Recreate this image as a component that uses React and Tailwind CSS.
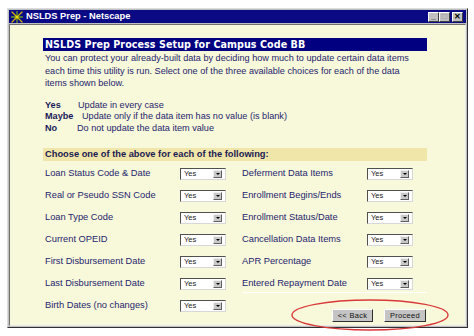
// NSLDS Prep — Process Setup dialog (Netscape window)

const LEFT_ROWS = [
  "Loan Status Code & Date",
  "Real or Pseudo SSN Code",
  "Loan Type Code",
  "Current OPEID",
  "First Disbursement Date",
  "Last Disbursement Date",
  "Birth Dates (no changes)",
];

const RIGHT_ROWS = [
  "Deferment Data Items",
  "Enrollment Begins/Ends",
  "Enrollment Status/Date",
  "Cancellation Data Items",
  "APR Percentage",
  "Entered Repayment Date",
];

const LEGEND = [
  { key: "Yes", text: "Update in every case", w: "w-[33px]" },
  { key: "Maybe", text: "Update only if the data item has no value (is blank)", w: "w-[37px]" },
  { key: "No", text: "Do not update the data item value", w: "w-[32px]" },
];

function YesSelect() {
  return (
    <div className="flex items-center w-[46px] h-[12px] bg-white border border-t-[#505050] border-l-[#505050] border-r-[#d8d8d8] border-b-[#d8d8d8]">
      <span className="flex-1 pl-[3px] text-[7.5px] leading-none text-[#222]">Yes</span>
      <div className="flex items-center justify-center w-[9px] h-[8px] mr-[3px] bg-[#c8c8c8] border border-t-[#f0f0f0] border-l-[#f0f0f0] border-r-[#606060] border-b-[#606060]">
        <div className="w-0 h-0 border-l-[2px] border-r-[2px] border-t-[2px] border-l-transparent border-r-transparent border-t-black" />
      </div>
    </div>
  );
}

function TitleButton({ children, dim }) {
  return (
    <div className={`flex items-center justify-center w-[11px] h-[10px] bg-[#c0c0c0] border border-t-white border-l-white border-r-[#404040] border-b-[#404040] text-[8px] font-bold leading-none ${dim ? "text-[#8a8a8a]" : "text-black"}`}>
      {children}
    </div>
  );
}

function NetscapeIcon() {
  return (
    <svg width="12" height="12" viewBox="0 0 12 12">
      <g stroke="#c8b400" strokeWidth="1.3" strokeLinecap="round">
        <line x1="1" y1="1" x2="11" y2="11" />
        <line x1="11" y1="1" x2="1" y2="11" />
        <line x1="6" y1="0.5" x2="6" y2="11.5" stroke="#6a9a20" />
        <line x1="0.5" y1="6" x2="11.5" y2="6" stroke="#6a9a20" />
      </g>
      <circle cx="6" cy="6" r="1.6" fill="#e8d800" />
    </svg>
  );
}

function WinButton({ children, w }) {
  return (
    <div className={`flex items-center justify-center ${w} h-[13px] bg-[#c4c4c4] border border-t-white border-l-white border-r-[#303030] border-b-[#303030] text-[7.5px] text-[#111] tracking-[0.3px]`}>
      {children}
    </div>
  );
}

export default function App() {
  return (
    <div className="relative w-[474px] h-[336px] bg-white overflow-hidden pt-[8px] pl-[7px] font-['Liberation_Sans',Arial,sans-serif]">
      {/* Window */}
      <div className="flex flex-col w-[461px] h-[320px] bg-[#c0c0c0] border border-t-[#dcdcdc] border-l-[#dcdcdc] border-r-[#303030] border-b-[#303030] p-[1px]">

        {/* Title bar */}
        <div className="flex items-center h-[13px] bg-[#0a0a84] pl-[2px] pr-[3px]">
          <NetscapeIcon />
          <span className="ml-[3px] text-[9.3px] font-bold text-white leading-none">NSLDS Prep - Netscape</span>
          <div className="ml-auto flex items-center">
            <TitleButton>_</TitleButton>
            <TitleButton dim>□</TitleButton>
            <div className="ml-[2px]"><TitleButton>✕</TitleButton></div>
          </div>
        </div>

        {/* Page */}
        <div className="flex-1 mt-[1px] bg-[#f8f8da] border border-t-[#707070] border-l-[#707070] border-r-[#e8e8e8] border-b-[#e8e8e8] pl-[33px] pt-[13px] text-[#25256e]">
          <div className="w-[384px]">
            <div className="h-[13px] bg-[#000080] pl-[2px] flex items-center">
              <span className="text-[9.6px] font-bold text-white leading-none tracking-[0.05px] font-['DejaVu_Sans',Verdana,sans-serif]">
                NSLDS Prep Process Setup for Campus Code BB
              </span>
            </div>

            <p className="mt-[1px] pl-[2px] text-[9.15px] leading-[12.5px] whitespace-nowrap">
              You can protect your already-built data by deciding how much to update certain data items
              <br />
              each time this utility is run. Select one of the three available choices for each of the data
              <br />
              items shown below.
            </p>

            <div className="mt-[10px] pl-[2px] text-[9.15px] leading-[11.5px]">
              {LEGEND.map((l) => (
                <div key={l.key} className="flex">
                  <span className={`${l.w} font-bold text-[#1a1a5a]`}>{l.key}</span>
                  <span>{l.text}</span>
                </div>
              ))}
            </div>

            <div className="mt-[14px] h-[13px] bg-[#f0e6aa] pl-[2px] flex items-center">
              <span className="text-[9.3px] font-bold text-[#1a1a50] leading-none">
                Choose one of the above for each of the following:
              </span>
            </div>

            <div className="mt-[2px] flex text-[9.3px]">
              <div className="flex flex-col w-[199px] pl-[2px]">
                {LEFT_ROWS.map((r) => (
                  <div key={r} className="flex items-center h-[22px]">
                    <span className="w-[135px]">{r}</span>
                    <YesSelect />
                  </div>
                ))}
              </div>

              <div className="flex flex-col flex-1">
                {RIGHT_ROWS.map((r) => (
                  <div key={r} className="flex items-center h-[22px]">
                    <span className="w-[125px]">{r}</span>
                    <YesSelect />
                  </div>
                ))}
                <div className="-mt-[3px] h-px bg-[#a0a0a0] border-b border-white" />
                <div className="mt-[16px] flex gap-[11px] pl-[90px]">
                  <WinButton w="w-[41px]">&lt;&lt; Back</WinButton>
                  <WinButton w="w-[42px]">Proceed</WinButton>
                </div>
              </div>
            </div>
          </div>
        </div>
      </div>

      {/* Red annotation ellipse */}
      <svg className="absolute left-0 top-0 pointer-events-none" width="474" height="336">
        <ellipse cx="370" cy="315" rx="78" ry="15" fill="none" stroke="#d83a3a" strokeWidth="1.4" />
      </svg>
    </div>
  );
}
